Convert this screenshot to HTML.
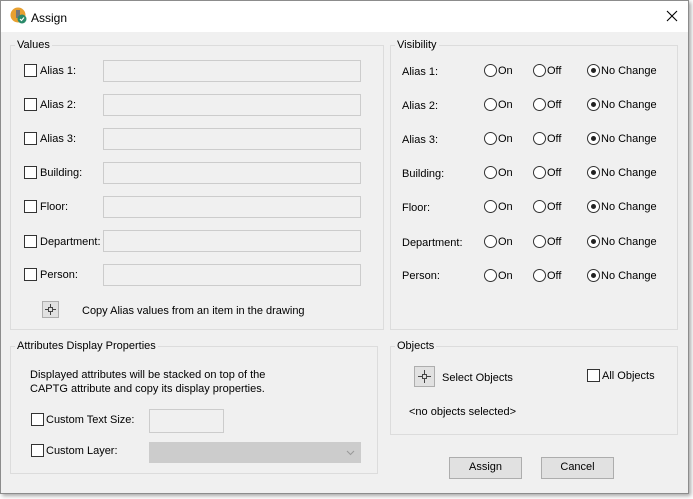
<!DOCTYPE html>
<html><head><style>
*{box-sizing:border-box}
body{margin:0;width:693px;height:499px;background:#fff;font-family:"Liberation Sans",sans-serif;font-size:11px;color:#000;position:relative;overflow:hidden}
.win{position:absolute;left:0;top:0;width:689px;height:494px;background:#f0f0f0;border:1px solid #8c8c8c;box-shadow:2px 2px 4px rgba(0,0,0,.35)}
.title{position:absolute;left:0;top:0;width:687px;height:31px;background:#fff}
.a{position:absolute;white-space:nowrap;padding-top:1px}
.grp{position:absolute;border:1px solid #dcdcdc}
.lg{position:absolute;background:#f0f0f0;padding:0 2px;top:-7px;left:4px}
.cb{position:absolute;width:13px;height:13px;border:1px solid #333;background:#fff}
.tb{position:absolute;height:22px;border:1px solid #ccc;background:#f0f0f0}
.rd{position:absolute;width:13px;height:13px;border:1px solid #333;border-radius:50%;background:#fff}
.rd.on::after{content:"";position:absolute;left:3px;top:3px;width:5px;height:5px;border-radius:50%;background:#222}
.btn{position:absolute;border:1px solid #adadad;background:#e1e1e1;text-align:center;line-height:19px}
.pk{position:absolute;width:17px;height:17px;border:1px solid #adadad;background:#e1e1e1}
</style></head><body>
<div class="win">
<div class="title"></div>
<svg class="a" style="left:9px;top:6px;padding:0" width="17" height="17"><circle cx="8" cy="8" r="7.5" fill="#e8a030"/><rect x="6" y="3" width="4" height="8" fill="#777"/><circle cx="12" cy="12" r="4.5" fill="#2a8a6a"/><path d="M10 12l1.5 1.5 2.5-3" stroke="#fff" fill="none" stroke-width="1.2"/></svg>
<div class="a" style="left:30px;top:9px;font-size:12px">Assign</div>
<svg class="a" style="left:665px;top:9px;padding:0" width="12" height="12"><path d="M1 1L11 11M11 1L1 11" stroke="#000" stroke-width="1.1"/></svg>

<div class="grp" style="left:9px;top:44px;width:374px;height:285px"><span class="lg">Values</span></div>
<div class="grp" style="left:389px;top:44px;width:288px;height:285px"><span class="lg">Visibility</span></div>
<div class="grp" style="left:9px;top:345px;width:368px;height:128px"><span class="lg">Attributes Display Properties</span></div>
<div class="grp" style="left:389px;top:345px;width:288px;height:89px"><span class="lg">Objects</span></div>

<div class="cb" style="left:23px;top:63px"></div><div class="a" style="left:39px;top:63px">Alias 1:</div><div class="tb" style="left:102px;top:59px;width:258px"></div>
<div class="cb" style="left:23px;top:97px"></div><div class="a" style="left:39px;top:97px">Alias 2:</div><div class="tb" style="left:102px;top:93px;width:258px"></div>
<div class="cb" style="left:23px;top:131px"></div><div class="a" style="left:39px;top:131px">Alias 3:</div><div class="tb" style="left:102px;top:127px;width:258px"></div>
<div class="cb" style="left:23px;top:165px"></div><div class="a" style="left:39px;top:165px">Building:</div><div class="tb" style="left:102px;top:161px;width:258px"></div>
<div class="cb" style="left:23px;top:199px"></div><div class="a" style="left:39px;top:199px">Floor:</div><div class="tb" style="left:102px;top:195px;width:258px"></div>
<div class="cb" style="left:23px;top:234px"></div><div class="a" style="left:39px;top:234px">Department:</div><div class="tb" style="left:102px;top:229px;width:258px"></div>
<div class="cb" style="left:23px;top:267px"></div><div class="a" style="left:39px;top:267px">Person:</div><div class="tb" style="left:102px;top:263px;width:258px"></div>
<div class="pk" style="left:41px;top:300px"><svg width="15" height="15"><path d="M7.5 2v11M2 7.5h11" stroke="#444"/><rect x="5.5" y="5.5" width="4" height="4" fill="#e1e1e1" stroke="#444"/></svg></div>
<div class="a" style="left:81px;top:303px">Copy Alias values from an item in the drawing</div>

<div class="a" style="left:401px;top:64px">Alias 1:</div>
<div class="a" style="left:401px;top:98px">Alias 2:</div>
<div class="a" style="left:401px;top:132px">Alias 3:</div>
<div class="a" style="left:401px;top:166px">Building:</div>
<div class="a" style="left:401px;top:200px">Floor:</div>
<div class="a" style="left:401px;top:235px">Department:</div>
<div class="a" style="left:401px;top:268px">Person:</div>
<div id="rads"></div>
<script>
var ys=[63,97,131,165,199,234,268],h="";
ys.forEach(function(y){h+='<div class="rd" style="left:483px;top:'+y+'px"></div><div class="a" style="left:497px;top:'+y+'px">On</div>'+
'<div class="rd" style="left:532px;top:'+y+'px"></div><div class="a" style="left:546px;top:'+y+'px">Off</div>'+
'<div class="rd on" style="left:586px;top:'+y+'px"></div><div class="a" style="left:600px;top:'+y+'px">No Change</div>';});
document.getElementById('rads').outerHTML=h;
</script>

<div class="a" style="left:29px;top:366px;line-height:14px">Displayed attributes will be stacked on top of the<br>CAPTG attribute and copy its display properties.</div>
<div class="cb" style="left:30px;top:412px"></div><div class="a" style="left:45px;top:412px">Custom Text Size:</div>
<div class="tb" style="left:148px;top:408px;width:75px;height:24px;background:#f0f0f0"></div>
<div class="cb" style="left:30px;top:443px"></div><div class="a" style="left:45px;top:443px">Custom Layer:</div>
<div class="tb" style="left:148px;top:441px;width:212px;height:21px;background:#ccc;border-color:#ccc"></div>
<svg class="a" style="left:345px;top:449px;padding:0" width="9" height="6"><path d="M1 1l3.5 3.5L8 1" stroke="#999" fill="none"/></svg>

<div class="pk" style="left:413px;top:365px;width:21px;height:21px"><svg width="19" height="19"><path d="M9.5 3v13M3 9.5h13" stroke="#444"/><rect x="7.5" y="7.5" width="4" height="4" fill="#e1e1e1" stroke="#444"/></svg></div>
<div class="a" style="left:441px;top:370px">Select Objects</div>
<div class="cb" style="left:586px;top:368px"></div><div class="a" style="left:601px;top:368px">All Objects</div>
<div class="a" style="left:408px;top:404px">&lt;no objects selected&gt;</div>

<div class="btn" style="left:448px;top:456px;width:73px;height:22px">Assign</div>
<div class="btn" style="left:540px;top:456px;width:73px;height:22px">Cancel</div>
</div>
</body></html>
